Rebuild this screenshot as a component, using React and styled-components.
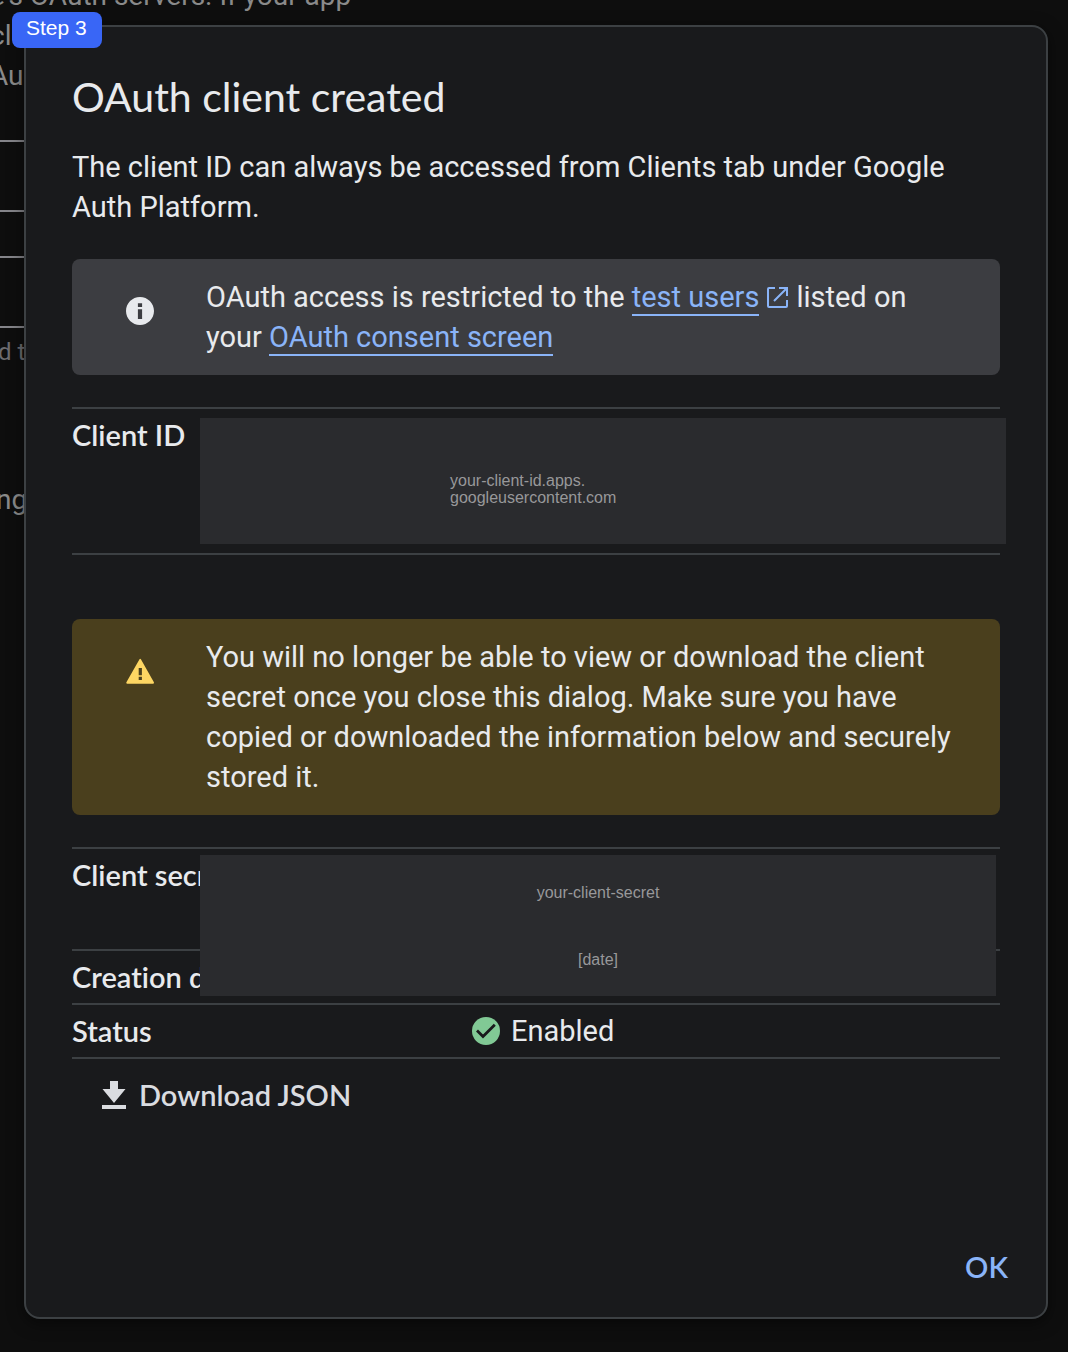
import React from 'react'
import styled, { createGlobalStyle, ThemeProvider } from 'styled-components'

const theme = {
  page: '#0e0e0e',
  surface: '#191a1c',
  line: '#3c4043',
  text: '#e8eaed',
  muted: '#98989a',
  link: '#8ab4f8',
  cover: '#2a2b2e',
  body: 'Roboto, "Liberation Sans", sans-serif',
  display: 'Lato, Roboto, sans-serif',
  label: '"Liberation Sans", Arial, sans-serif'
}

const GlobalStyle = createGlobalStyle`
  * {
    box-sizing: border-box;
  }

  body {
    margin: 0;
    background: ${theme.page};
    color: ${theme.text};
    font-family: ${theme.body};
    font-size: 29px;
    font-variant-ligatures: none;
    line-height: 40px;
  }
`

const Page = styled.div`
  position: relative;
  min-height: 100vh;
  padding: 25px 20px 33px 24px;
  overflow: hidden;
`

/* the form that stays visible round the dialog */
const Backdrop = styled.div`
  position: absolute;
  inset: 0;
  display: flex;
  flex-direction: column;
  align-items: flex-start;
  overflow: hidden;
  color: #8a8a8a;
  font-size: 28px;
`

const BackdropText = styled.p`
  margin: -24px 0 44px -10px;
  white-space: nowrap;
`

const BackdropField = styled.input`
  width: 50%;
  height: 72px;
  margin: 0 0 44px -8px;
  border: 2px solid #85858a;
  background: transparent;
`

const BackdropHint = styled.p`
  margin: -40px 0 108px -2px;
  color: #6c6c70;
  font-size: 24px;
`

const BackdropNote = styled.p`
  margin: 0 0 0 -4px;
`

const StepBadge = styled.span`
  position: absolute;
  z-index: 2;
  top: 12px;
  left: 12px;
  height: 36px;
  padding: 0 15px 0 14px;
  border-radius: 8px;
  background: #3966f6;
  color: white;
  font-family: ${props => props.theme.label};
  font-size: 21px;
  line-height: 32px;
`

const Dialog = styled.section`
  position: relative;
  display: flex;
  flex-direction: column;
  min-height: calc(100vh - 58px);
  border: 2px solid ${props => props.theme.line};
  border-radius: 16px;
  background: ${props => props.theme.surface};
  box-shadow: 0 4px 16px 0 rgba(0,0,0,0.5);
`

const DialogBody = styled.div`
  padding: 46px 46px 0;
`

const Title = styled.h1`
  margin: 0 0 26px;
  font-family: ${props => props.theme.display};
  font-size: 41px;
  font-weight: 400;
  line-height: 48px;
`

const Intro = styled.p`
  margin: 0 0 32px;
`

const Notice = styled.div`
  display: flex;
  align-items: flex-start;
  gap: 52px;
  margin-bottom: 32px;
  padding: 18px 40px 18px 54px;
  border-radius: 8px;
  background: ${props => props.$warning ? '#4a3f1d' : '#3c3d41'};

  > svg {
    flex: none;
    margin-top: 20px;
  }

  p {
    margin: 0;
  }
`

const Link = styled.a`
  border-bottom: 2px solid ${props => props.theme.link};
  color: ${props => props.theme.link};
  text-decoration: none;
`

const LaunchIcon = styled.svg`
  margin: 0 8px;
  vertical-align: -1px;
`

const Details = styled.div`
  position: relative;
  margin-bottom: ${props => props.$spaced ? '64px' : '16px'};
`

const Table = styled.table`
  width: 100%;
  border-top: 2px solid ${props => props.theme.line};
  border-spacing: 0;
  table-layout: fixed;
`

const Row = styled.tr`
  height: ${props => props.$height || 54}px;

  th, td {
    padding: 6px 0;
    border-bottom: 2px solid ${props => props.theme.line};
    text-align: left;
    vertical-align: top;
  }

  th {
    width: 400px;
    font-family: ${props => props.theme.display};
    font-weight: 600;
  }
`

const Status = styled.span`
  display: flex;
  align-items: center;
  gap: 11px;
`

const Cover = styled.div`
  position: absolute;
  left: 128px;
  display: flex;
  flex-direction: column;
  background: ${props => props.theme.cover};
  color: ${props => props.theme.muted};
  font-family: ${props => props.theme.label};
  font-size: 16px;
  line-height: 17px;
`

const IdCover = styled(Cover)`
  top: 11px;
  right: -6px;
  height: 126px;
  padding: 54px 0 0 250px;
`

const SecretCover = styled(Cover)`
  top: 8px;
  right: 4px;
  height: 141px;
  align-items: center;
  gap: 50px;
  padding-top: 29px;
`

const Button = styled.button`
  display: inline-flex;
  align-items: center;
  gap: 13px;
  padding: 0;
  border: 0;
  background: none;
  color: ${props => props.$primary ? props.theme.link : '#dadce0'};
  font: 600 29px/40px ${props => props.theme.display};
  cursor: pointer;
`

const Download = styled.div`
  padding-left: 30px;
`

const Actions = styled.div`
  display: flex;
  justify-content: flex-end;
  margin-top: auto;
  padding: 30px 38px;
`

const InfoIcon = () => (
  <svg width="28" height="28" viewBox="2 2 20 20" fill="#e8eaed" aria-hidden="true">
    <path d="M12 2C6.48 2 2 6.48 2 12s4.48 10 10 10 10-4.48 10-10S17.52 2 12 2zm1.5 15.7h-3v-7h3v7zm0-8.600h-3V6.400h3v2.700z" />
  </svg>
)

const WarningIcon = () => (
  <svg width="28" height="28" viewBox="0 0 28 28" fill="#fdd663" aria-hidden="true">
    <path d="M13.500 2.200Q14.200 1.200 14.900 2.200L27.900 25.200Q28.300 26.600 27 26.700H1.300Q0 26.600.4 25.200zM12.700 11v7.200h3.200V11zm0 8.700v3.200h3.200v-3.200z" fillRule="evenodd" />
  </svg>
)

const CheckIcon = () => (
  <svg width="28" height="28" viewBox="0 0 28 28" aria-hidden="true">
    <circle cx="14" cy="14" r="14" fill="#81c995" />
    <path d="M5 13.500l6 6L22.800 7.700" fill="none" stroke="#191a1c" strokeWidth="2.800" />
  </svg>
)

const DownloadIcon = () => (
  <svg width="24" height="28" viewBox="0 0 24 28" fill="#dadce0" aria-hidden="true">
    <path d="M8 0h8v8h7.500L12 22 .5 8H8zM0 24h24v4H0z" />
  </svg>
)

const App = () => (
  <ThemeProvider theme={theme}>
    <GlobalStyle />
    <Page>
      <Backdrop>
        <BackdropText>
          e's OAuth servers. If your app<br />
          cl<br />
          Au
        </BackdropText>
        <BackdropField type="text" aria-label="Name" />
        <BackdropField type="text" aria-label="Address" />
        <BackdropHint>d t</BackdropHint>
        <BackdropNote>ng</BackdropNote>
      </Backdrop>

      <StepBadge>Step 3</StepBadge>

      <Dialog role="dialog" aria-labelledby="dialog-title">
        <DialogBody>
          <Title id="dialog-title">OAuth client created</Title>
          <Intro>
            The client ID can always be accessed from Clients tab under Google Auth Platform.
          </Intro>

          <Notice>
            <InfoIcon />
            <p>
              OAuth access is restricted to the <Link href="#users">test users</Link>
              <LaunchIcon width="21" height="21" viewBox="0 0 21 21" fill="none" stroke="#8ab4f8" strokeWidth="2" aria-hidden="true">
                <path d="M8 1H2Q1 1 1 2v17q0 1 1 1h17q1 0 1-1v-6M12 1h8v8M20 1L7 14" />
              </LaunchIcon>
              listed on your <Link href="#consent">OAuth consent screen</Link>
            </p>
          </Notice>

          <Details $spaced>
            <Table>
              <tbody>
                <Row $height={146}>
                  <th scope="row">Client ID</th>
                  <td />
                </Row>
              </tbody>
            </Table>
            <IdCover>
              <span>your-client-id.apps.</span>
              <span>googleusercontent.com</span>
            </IdCover>
          </Details>

          <Notice $warning>
            <WarningIcon />
            <p>
              You will no longer be able to view or download the client secret once you
              close this dialog. Make sure you have copied or downloaded the information
              below and securely stored it.
            </p>
          </Notice>

          <Details>
            <Table>
              <tbody>
                <Row $height={102}>
                  <th scope="row">Client secret</th>
                  <td />
                </Row>
                <Row>
                  <th scope="row">Creation date</th>
                  <td />
                </Row>
                <Row>
                  <th scope="row">Status</th>
                  <td>
                    <Status><CheckIcon />Enabled</Status>
                  </td>
                </Row>
              </tbody>
            </Table>
            <SecretCover>
              <span>your-client-secret</span>
              <span>[date]</span>
            </SecretCover>
          </Details>

          <Download>
            <Button type="button"><DownloadIcon />Download JSON</Button>
          </Download>
        </DialogBody>

        <Actions>
          <Button type="button" $primary>OK</Button>
        </Actions>
      </Dialog>
    </Page>
  </ThemeProvider>
)

export default App
